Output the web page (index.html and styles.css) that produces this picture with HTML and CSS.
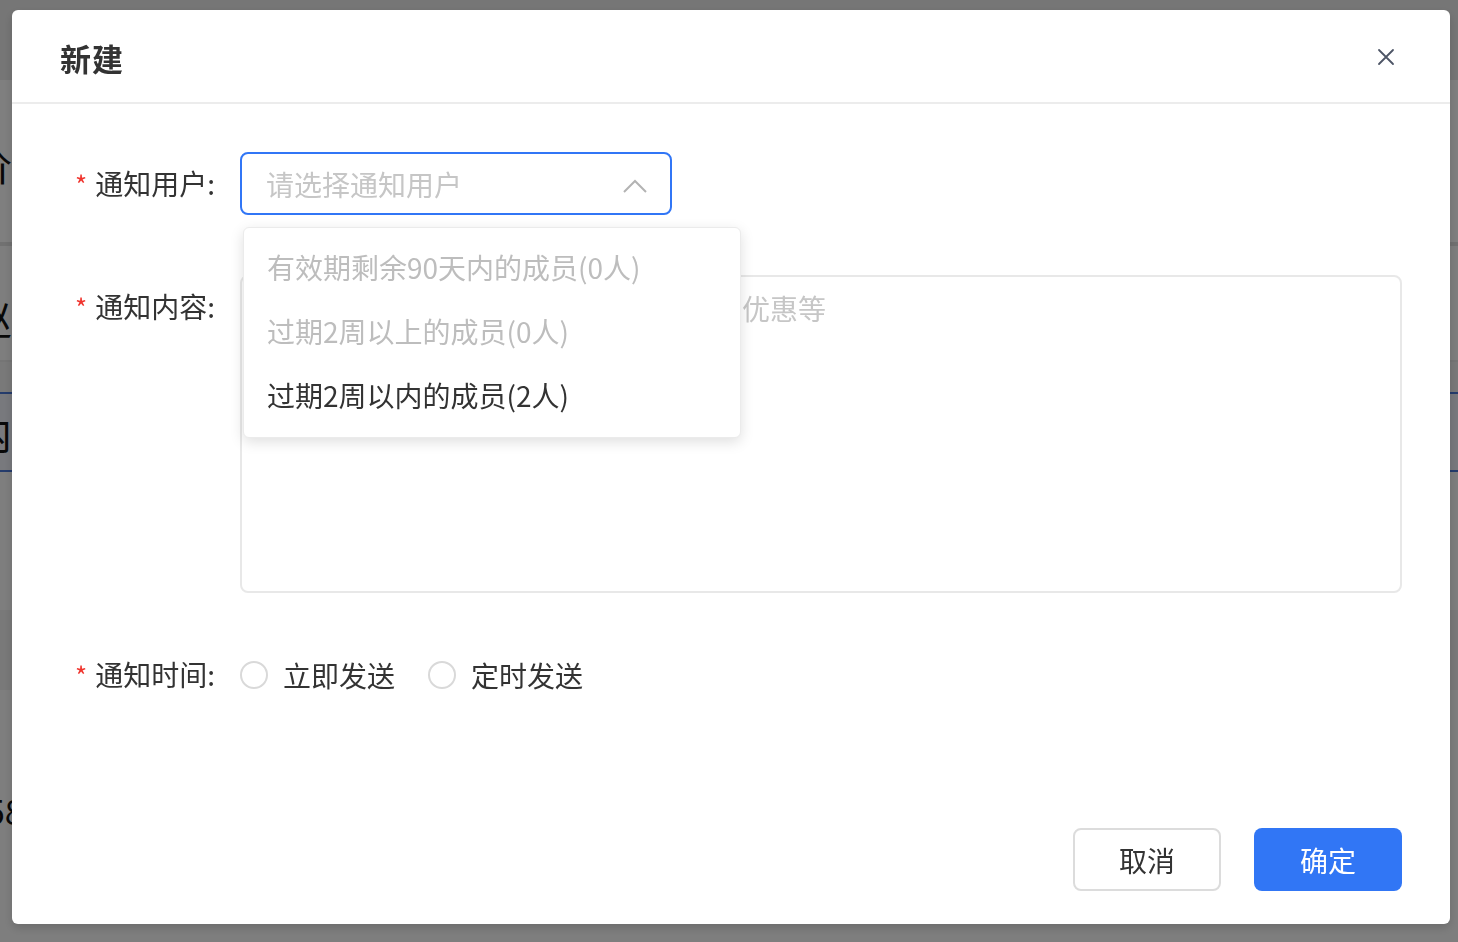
FILE: index.html
```html
<!DOCTYPE html>
<html lang="zh-CN">
<head>
<meta charset="utf-8">
<title>新建</title>
<link rel="stylesheet" href="styles.css">
</head>
<body>
<div class="page">
  <div class="band band-top"></div>
  <div class="band band-a"><span class="frag frag-1">价</span></div>
  <div class="band band-line"></div>
  <div class="band band-b"><span class="frag frag-2">赵</span></div>
  <div class="band band-c"></div>
  <div class="band band-sel"><span class="frag frag-3">内</span></div>
  <div class="band band-d"></div>
  <div class="band band-e"></div>
  <div class="band band-f"><span class="frag frag-4">58</span></div>
</div>
<div class="mask"></div>
<div class="dialog">
  <div class="dlg-header">
    <div class="dlg-title">新建</div>
    <svg class="dlg-close" width="18" height="18" viewBox="0 0 18 18"><path d="M2 2 L16 16 M16 2 L2 16" stroke="#4d5566" stroke-width="1.8" fill="none" stroke-linecap="round"/></svg>
  </div>
  <div class="dlg-body">
    <div class="form-item">
      <div class="label"><span class="req">*</span>通知用户:</div>
      <div class="control">
        <div class="select">
          <span class="placeholder">请选择通知用户</span>
          <svg class="chevron" width="26" height="16" viewBox="0 0 26 16"><polyline points="2,14 13,3 24,14" stroke="#b3b3b3" stroke-width="2" fill="none"/></svg>
        </div>
        <div class="dropdown">
          <div class="opt disabled">有效期剩余90天内的成员(0人)</div>
          <div class="opt disabled">过期2周以上的成员(0人)</div>
          <div class="opt">过期2周以内的成员(2人)</div>
        </div>
      </div>
    </div>
    <div class="form-item item-content">
      <div class="label"><span class="req">*</span>通知内容:</div>
      <div class="control">
        <div class="textarea"><span class="placeholder">请输入通知内容，例如到期提醒、续费优惠等</span></div>
      </div>
    </div>
    <div class="form-item item-time">
      <div class="label"><span class="req">*</span>通知时间:</div>
      <div class="control radios">
        <label class="radio"><span class="circle"></span><span class="radio-text">立即发送</span></label>
        <label class="radio"><span class="circle"></span><span class="radio-text">定时发送</span></label>
      </div>
    </div>
  </div>
  <div class="dlg-footer">
    <div class="btn btn-cancel">取消</div>
    <div class="btn btn-ok">确定</div>
  </div>
</div>
</body>
</html>
```

FILE: styles.css
```css
html, body {
  margin: 0;
  padding: 0;
  width: 1458px;
  height: 942px;
  overflow: hidden;
  font-family: "Noto Sans CJK SC", "Noto Sans", sans-serif;
  background: #fff;
}

.page {
  width: 1458px;
  height: 942px;
  display: flex;
  flex-direction: column;
  overflow: hidden;
}
.band {
  position: relative;
  flex: none;
  overflow: hidden;
  color: #111;
  font-size: 40px;
  line-height: 1;
}
.band-top { height: 80px; background: #ececec; }
.band-a { height: 162px; background: #fefefe; }
.band-line { height: 4px; background: #e2e2e2; }
.band-b { height: 114px; background: #fdfdfd; border-bottom: 2px solid #eaeaea; }
.band-c { height: 30px; background: #f2f2f2; }
.band-sel { height: 76px; background: #f0f3fa; border-top: 2px solid #4a78d8; border-bottom: 2px solid #4a78d8; }
.band-d { height: 138px; background: #fdfdfd; }
.band-e { height: 80px; background: #f3f3f3; }
.band-f { height: 260px; background: #fdfdfd; }
.frag { display: block; margin-left: -28px; }
.frag-1 { margin-top: 64px; }
.frag-2 { margin-top: 52px; }
.frag-3 { margin-top: 18px; }
.frag-4 { margin-top: 104px; margin-left: -14px; font-size: 34px; }

.mask {
  position: fixed;
  left: 0;
  top: 0;
  width: 1458px;
  height: 942px;
  background: rgba(0, 0, 0, 0.5);
}

.dialog {
  position: fixed;
  left: 12px;
  top: 10px;
  width: 1438px;
  height: 914px;
  background: #fff;
  border-radius: 6px;
  box-shadow: 0 4px 10px rgba(0, 0, 0, 0.15);
  display: flex;
  flex-direction: column;
  color: #333;
}

.dlg-header {
  border-bottom: 2px solid #ececec;
  display: flex;
  align-items: center;
  justify-content: space-between;
  padding: 2px 55px 0 48px;
  box-sizing: content-box;
  height: 90px;
}
.dlg-title {
  font-size: 31px;
  font-weight: 600;
  color: #333;
  letter-spacing: 1px;
}
.dlg-close { display: block; }

.dlg-body {
  padding: 48px 48px 0 0;
}

.form-item {
  display: grid;
  grid-template-columns: 228px 1fr;
  align-items: start;
}
.label {
  text-align: right;
  padding-right: 25px;
  font-size: 28px;
  line-height: 62px;
  height: 63px;
  color: #333;
  white-space: nowrap;
}
.req {
  color: #f0352e;
  font-size: 26px;
  margin-right: 8px;
}
.control {
  position: relative;
}

.select {
  width: 432px;
  height: 63px;
  box-sizing: border-box;
  border: 2px solid #3176f6;
  border-radius: 8px;
  padding: 0 22px 0 24px;
  display: flex;
  align-items: center;
  justify-content: space-between;
}
.placeholder {
  font-size: 28px;
  color: #c6c6c6;
  white-space: nowrap;
}
.chevron { display: block; margin-top: 4px; }

.dropdown {
  position: absolute;
  left: 3px;
  top: 75px;
  width: 498px;
  box-sizing: border-box;
  background: #fff;
  border: 1px solid #ebebeb;
  border-radius: 6px;
  box-shadow: 0 4px 14px rgba(0, 0, 0, 0.13);
  padding: 8px 0 9px;
  z-index: 2;
}
.opt {
  height: 64px;
  line-height: 62px;
  padding: 0 23px;
  font-size: 28px;
  color: #333;
  white-space: nowrap;
}
.opt.disabled { color: #bdbdbd; }

.item-content { margin-top: 60px; }
.textarea {
  height: 318px;
  box-sizing: border-box;
  border: 2px solid #e8e8e8;
  border-radius: 8px;
  padding: 11px 24px;
  line-height: 40px;
  overflow: hidden;
}

.item-time { margin-top: 50px; }
.radios {
  display: flex;
  align-items: center;
  height: 63px;
  gap: 33px;
}
.radio {
  display: flex;
  align-items: center;
}
.circle {
  width: 28px;
  height: 28px;
  box-sizing: border-box;
  border: 2px solid #d9d9d9;
  border-radius: 50%;
  background: #fff;
}
.radio-text {
  margin-left: 15px;
  font-size: 28px;
  line-height: 62px;
  color: #333;
}

.dlg-footer {
  margin-top: auto;
  display: flex;
  justify-content: flex-end;
  gap: 33px;
  padding: 0 48px 33px 0;
}
.btn {
  width: 148px;
  height: 63px;
  box-sizing: border-box;
  border-radius: 8px;
  font-size: 28px;
  display: flex;
  align-items: center;
  justify-content: center;
}
.btn-cancel {
  border: 2px solid #dcdcdc;
  color: #333;
  background: #fff;
}
.btn-ok {
  background: #3176f5;
  color: #fff;
}
```
